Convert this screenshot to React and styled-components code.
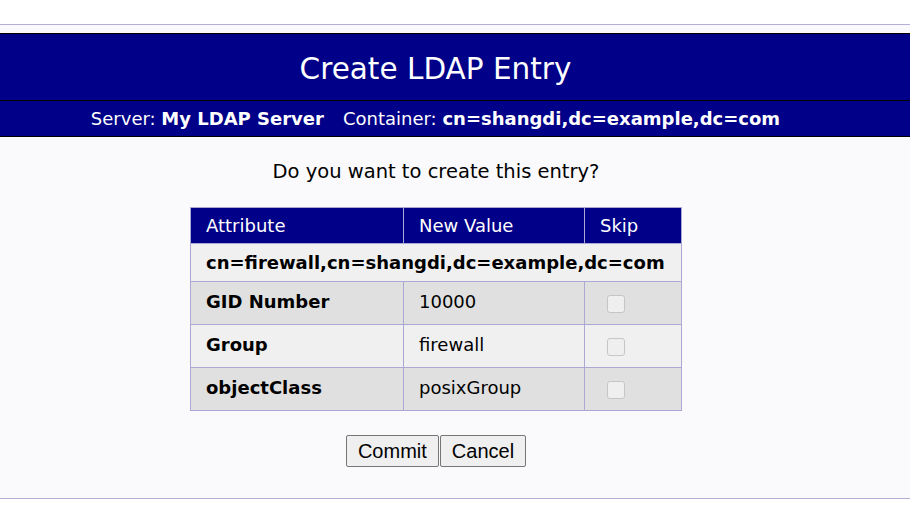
import React from "react";
import styled, { createGlobalStyle } from "styled-components";

const Global = createGlobalStyle`
  html, body { margin: 0; padding: 0; background: #ffffff; }
  body { font-family: "DejaVu Sans", Verdana, sans-serif; }
`;

const Page = styled.div`
  padding-top: 24px;
  width: 910px;
  height: 530px;
  box-sizing: border-box;
`;

const Frame = styled.div`
  border-top: 1px solid #b3b0d8;
  border-bottom: 1px solid #b3b0d8;
  background: #fafafc;
  padding-top: 8px;
  height: 475px;
  box-sizing: border-box;
`;

const Inner = styled.div`
  width: 872px;
  display: flex;
  flex-direction: column;
  align-items: center;
`;

const Bar = styled.div`
  width: 910px;
  background: #000088;
  border-top: 1px solid #000;
  color: #fff;
  padding-right: 39px;
  box-sizing: border-box;
  display: flex;
  align-items: center;
  justify-content: center;
  white-space: pre;
`;

const TitleBar = styled(Bar)`
  height: 67px;
  font-size: 29.5px;
  padding-top: 4px;
`;

const SubBar = styled(Bar)`
  height: 37px;
  font-size: 18px;
  border-bottom: 1px solid #000;
  padding-top: 0;
`;

const Label = styled.span`
  & + & {
    margin-left: 19px;
  }
`;

const Question = styled.div`
  margin-top: 24px;
  font-size: 19.5px;
  line-height: 22px;
  color: #000;
`;

const Table = styled.table`
  margin-top: 24px;
  border-collapse: collapse;
  width: 491px;
  font-size: 18px;
  line-height: 21px;
  table-layout: fixed;
`;

const HeadRow = styled.tr`
  height: 36px;
`;

const DnRow = styled.tr`
  height: 38px;
`;

const Row = styled.tr`
  height: 43px;
`;

const Th = styled.th`
  background: #000088;
  color: #fff;
  font-weight: normal;
  text-align: left;
  padding: 0 0 1px 15px;
  border: 1px solid #aba8d4;
`;

const Dn = styled.td`
  background: #f0f0f0;
  font-weight: bold;
  padding: 0 0 1px 15px;
  border: 1px solid #aba8d4;
  color: #000;
`;

const Td = styled.td`
  background: ${(p) => (p.$alt ? "#f0f0f0" : "#e0e0e0")};
  font-weight: ${(p) => (p.$bold ? "bold" : "normal")};
  padding: 0 0 4px 15px;
  border: 1px solid #aba8d4;
  color: #000;
  vertical-align: middle;
`;

const SkipTd = styled(Td)`
  padding: 2px 0 0 22px;
`;

const Check = styled.span`
  display: block;
  width: 16px;
  height: 16px;
  border: 1px solid #c6c6c6;
  border-radius: 3px;
  background: #efefef;
`;

const Buttons = styled.div`
  margin-top: 24px;
  display: flex;
  gap: 1px;
`;

const Button = styled.button`
  font-family: "Liberation Sans", Arial, sans-serif;
  font-size: 20px;
  height: 32px;
  padding: 0 11px;
  background: #efefef;
  border: 1px solid #767676;
  border-radius: 2px;
  color: #000;
`;

const rows = [
  { name: "GID Number", value: "10000" },
  { name: "Group", value: "firewall" },
  { name: "objectClass", value: "posixGroup" },
];

export default function App() {
  return (
    <>
      <Global />
      <Page>
        <Frame>
          <TitleBar>Create LDAP Entry</TitleBar>
          <SubBar>
            <Label>
              Server: <b>My LDAP Server</b>
            </Label>
            <Label>
              Container: <b>cn=shangdi,dc=example,dc=com</b>
            </Label>
          </SubBar>
          <Inner>
            <Question>Do you want to create this entry?</Question>
            <Table>
              <colgroup>
                <col style={{ width: 213 }} />
                <col style={{ width: 181 }} />
                <col style={{ width: 97 }} />
              </colgroup>
              <thead>
                <HeadRow>
                  <Th>Attribute</Th>
                  <Th>New Value</Th>
                  <Th>Skip</Th>
                </HeadRow>
              </thead>
              <tbody>
                <DnRow>
                  <Dn colSpan={3}>cn=firewall,cn=shangdi,dc=example,dc=com</Dn>
                </DnRow>
                {rows.map((r, i) => (
                  <Row key={r.name}>
                    <Td $bold $alt={i % 2 === 1}>{r.name}</Td>
                    <Td $alt={i % 2 === 1}>{r.value}</Td>
                    <SkipTd $alt={i % 2 === 1}>
                      <Check />
                    </SkipTd>
                  </Row>
                ))}
              </tbody>
            </Table>
            <Buttons>
              <Button>Commit</Button>
              <Button>Cancel</Button>
            </Buttons>
          </Inner>
        </Frame>
      </Page>
    </>
  );
}
